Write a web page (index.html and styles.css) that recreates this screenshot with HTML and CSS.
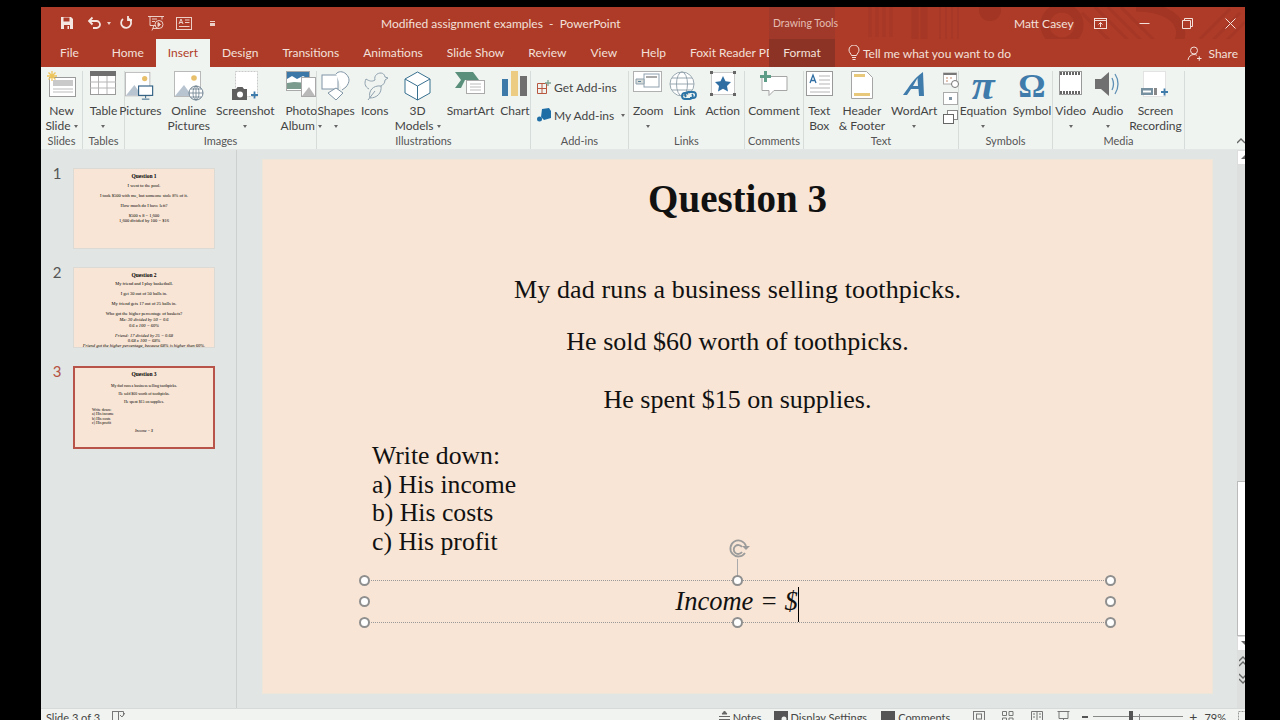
FILE: index.html
```html
<!DOCTYPE html>
<html lang="en">
<head>
  <meta charset="UTF-8">
  <title>Modified assignment examples - PowerPoint</title>
  <link rel="stylesheet" href="styles.css">
</head>
<body>
<div class="window">

  <!-- title bar -->
  <div class="titlebar">
    <svg class="pattern" width="405" height="60" viewBox="0 0 405 60" fill="none" stroke="#a23524">
      <path d="M30 0v30M37 0v30M44 0v30M51 0v30" stroke-width="3" opacity=".55"/>
      <path d="M75 0v38M84 0v38" stroke-width="7" opacity=".7"/>
      <path d="M100 0v34M106 0v34M112 0v34M118 0v34" stroke-width="2" opacity=".55"/>
      <circle cx="150" cy="3" r="11" fill="#a23524" stroke="none"/>
      <circle cx="222" cy="18" r="17" stroke-width="9"/>
      <path d="M255 0l45 45M268 0l45 45M281 0l45 45M242 6l40 40" stroke-width="3" opacity=".7"/>
      <path d="M296 0c50 0 60 34 20 58" stroke-width="9"/>
      <path d="M360 32l30-30M368 38l32-32M376 44l29-29" stroke-width="3" opacity=".6"/>
    </svg>
    <div class="qat">
      <svg width="14" height="14" viewBox="0 0 14 14"><path d="M1 1h10l2 2v10H1z" fill="#f4e6e1"/><path d="M3.500 1.500h6v4h-6z" fill="#ad3b28"/><path d="M4 9h6v4H4z" fill="#ad3b28"/><path d="M7.500 10h1.500v3H7.500z" fill="#f4e6e1"/></svg>
      <svg class="qat-undo" width="15" height="14" viewBox="0 0 15 14" fill="none" stroke="#f4e6e1" stroke-width="1.800"><path d="M2 5h7.500a3.500 3.500 0 0 1 0 7H6"/><path d="M5.500 1.500L2 5l3.500 3.500"/></svg>
      <span class="mini-caret"></span>
      <svg class="qat-redo" width="14" height="14" viewBox="0 0 14 14" fill="none" stroke="#f4e6e1" stroke-width="1.800"><path d="M9.500 2.500A5 5 0 1 1 4 3"/><path d="M9 0v4h4"/></svg>
      <svg class="qat-show" width="18" height="17" viewBox="0 0 18 17" fill="none" stroke="#eccfc7"><path d="M1 1.500h16M3 1.500v9h6M15 1.500v3"/><circle cx="12" cy="9.500" r="4"/><path d="M11 7.500l2.500 2-2.500 2z" fill="#eccfc7"/><path d="M5 4h5M5 6.500h3M7 10.500l-2 5M6 13.500h6"/></svg>
      <svg class="qat-box" width="16" height="13" viewBox="0 0 16 13" fill="none" stroke="#eccfc7"><rect x=".5" y=".5" width="15" height="12"/><path d="M3 7l2-5 2 5M3.800 5.500h2.500M9 3h4.500M9 5.500h4.500M3 9.500h10.500"/></svg>
      <span class="qat-more"></span>
    </div>
    <div class="doc-title">Modified assignment examples&nbsp; - &nbsp;PowerPoint</div>
    <div class="ctx-title">Drawing Tools</div>
    <div class="account">Matt Casey</div>
    <div class="win-btns">
      <svg width="13" height="11" viewBox="0 0 13 11" fill="none" stroke="#f3e0da"><rect x=".5" y=".5" width="12" height="10"/><path d="M.5 2.500h12M6.500 9V4.500M4.500 6.500l2-2 2 2"/></svg>
      <svg width="11" height="11" viewBox="0 0 11 11" stroke="#f3e0da"><path d="M.5 5.500h10"/></svg>
      <svg width="11" height="11" viewBox="0 0 11 11" fill="none" stroke="#f3e0da"><path d="M.5 2.500h8v8h-8zM2.500 2.500v-2h8v8h-2"/></svg>
      <svg width="11" height="11" viewBox="0 0 11 11" stroke="#f3e0da"><path d="M.5.500l10 10M10.500.500l-10 10"/></svg>
    </div>
  </div>

  <!-- tabs -->
  <div class="tabbar">
    <div class="tabs-main">
      <div class="tab tab-file">File</div>
      <div class="tab">Home</div>
      <div class="tab active">Insert</div>
      <div class="tab">Design</div>
      <div class="tab">Transitions</div>
      <div class="tab">Animations</div>
      <div class="tab">Slide Show</div>
      <div class="tab">Review</div>
      <div class="tab">View</div>
      <div class="tab">Help</div>
      <div class="tab">Foxit Reader PDF</div>
    </div>
    <div class="tab tab-format">Format</div>
    <div class="tell-me">
      <svg width="12" height="16" viewBox="0 0 12 16" fill="none" stroke="#f3e0da"><path d="M3.500 10.500C3 8.500 1 7.500 1 5a5 5 0 0 1 10 0c0 2.500-2 3.500-2.500 5.500z"/><path d="M4 12.500h4M4.500 14.500h3"/></svg>
      Tell me what you want to do
    </div>
    <div class="share">
      <svg width="15" height="15" viewBox="0 0 15 15" fill="none" stroke="#f3e0da"><circle cx="7" cy="4.500" r="3.500"/><path d="M1 14c.5-3.500 3-5.500 6-5.500 1 0 2 .2 2.800.7M10 12.500h4.500M12.250 10.300v4.500"/></svg>
      Share
    </div>
  </div>

  <!-- ribbon -->
  <div class="ribbon">
    <div class="group g-slides">
      <div class="tools">
        <div class="tool">
          <div class="icon">
            <svg width="30" height="27" viewBox="0 0 30 27" fill="none"><rect x="2.500" y="6.500" width="26" height="19" fill="#fff" stroke="#9a9a9a"/><rect x="6" y="9" width="20" height="6" fill="#c9c9c9"/><path d="M6 18h20M6 21h20" stroke="#bbb"/><path d="M5 0v10M0 5h10M1.500 1.500l7 7M8.500 1.500l-7 7" stroke="#edc45a" stroke-width="1.300"/></svg>
          </div>
          <span>New</span><span>Slide <i class="caret"></i></span>
        </div>
      </div>
      <div class="group-name">Slides</div>
    </div>

    <div class="group g-tables">
      <div class="tools">
        <div class="tool">
          <div class="icon">
            <svg width="26" height="24" viewBox="0 0 26 24" fill="none"><rect x=".5" y=".5" width="25" height="23" fill="#fff" stroke="#9a9a9a"/><rect x="0" y="0" width="26" height="5" fill="#6f6f6f"/><path d="M0 11h26M0 17h26M8.500 5v18M17 5v18" stroke="#b5b5b5"/></svg>
          </div>
          <span>Table</span><span><i class="caret"></i></span>
        </div>
      </div>
      <div class="group-name">Tables</div>
    </div>

    <div class="group g-images">
      <div class="tools">
        <div class="tool">
          <div class="icon">
            <svg width="30" height="30" viewBox="0 0 32 30" fill="none"><rect x=".5" y=".5" width="26" height="25" fill="#fff" stroke="#b9b9b9"/><circle cx="21" cy="7" r="2.800" fill="#e8bf6a"/><path d="M1 25l9-11 8 11z" fill="#b8c4d0"/><rect x="14.500" y="15" width="15" height="10" fill="#fff" stroke="#2d5d80" stroke-width="1.200"/><path d="M22 25v3M18 29h8" stroke="#2d5d80"/></svg>
          </div>
          <span>Pictures</span>
        </div>
        <div class="tool">
          <div class="icon">
            <svg width="30" height="30" viewBox="0 0 30 30" fill="none"><rect x=".5" y=".5" width="26" height="25" fill="#fff" stroke="#b9b9b9"/><circle cx="20" cy="7" r="2.800" fill="#e8bf6a"/><path d="M1 25l9-11 8 11z" fill="#b8c4d0"/><circle cx="22" cy="22" r="7" fill="#fff" stroke="#6b7f8e"/><path d="M15 22h14M22 15v14M17 18h10M17 26h10" stroke="#6b7f8e" stroke-width=".8"/><ellipse cx="22" cy="22" rx="3" ry="7" stroke="#6b7f8e" stroke-width=".8"/></svg>
          </div>
          <span>Online</span><span>Pictures</span>
        </div>
        <div class="tool">
          <div class="icon">
            <svg width="28" height="30" viewBox="0 0 28 30" fill="none"><rect x="4.500" y=".5" width="22" height="25" fill="#fff" stroke="#c9c9c9" stroke-dasharray="2 1"/><path d="M1 18h4l1.500-2h5l1.500 2h3v11H1z" fill="#5e5e5e"/><circle cx="9" cy="23.500" r="3" fill="#fff"/><path d="M20 24h7M23.500 20.500v7" stroke="#3f7cab" stroke-width="1.800"/></svg>
          </div>
          <span>Screenshot</span><span><i class="caret"></i></span>
        </div>
        <div class="tool">
          <div class="icon">
            <svg width="30" height="26" viewBox="0 0 30 26" fill="none"><rect x=".5" y=".5" width="23" height="19" fill="#fff" stroke="#a9a9a9"/><path d="M1 1h22v7H1z" fill="#3b78a8"/><path d="M1 8l5-3 5 3 6-3 6 3v3H1z" fill="#fff"/><path d="M1 18v-6l7-1 15 1v6z" fill="#7c9b8f"/><rect x="15.500" y="6.500" width="14" height="19" fill="#fff" stroke="#a9a9a9"/><path d="M16 25l7-9 6 9z" fill="#b9b9b9"/></svg>
          </div>
          <span>Photo</span><span>Album <i class="caret"></i></span>
        </div>
      </div>
      <div class="group-name">Images</div>
    </div>

    <div class="group g-illus">
      <div class="tools">
        <div class="tool">
          <div class="icon">
            <svg width="31" height="30" viewBox="0 0 31 30" fill="none" stroke="#7f94a5" stroke-width="1"><rect x="1" y="4" width="16" height="14" fill="#fff"/><path d="M15 3c2-3 7-3 10 0 4 4 4 8 0 13l-4 3" fill="#fff"/><path d="M15 17l7 5-7 7-8-7z" fill="#fff"/></svg>
          </div>
          <span>Shapes</span><span><i class="caret"></i></span>
        </div>
        <div class="tool">
          <div class="icon">
            <svg width="28" height="30" viewBox="0 0 28 30" fill="none" stroke="#8fa1ae"><path d="M14 9c-2-7 9-10 10-3l3 1-3 2c0 3-2 5-4 6M14 9c-3 2-6 1-9-1-2 4-1 8 3 10"/><path d="M9 27c-2-7 3-13 11-12 1 7-4 12-11 12zM7 29l7-9"/></svg>
          </div>
          <span>Icons</span>
        </div>
        <div class="tool">
          <div class="icon">
            <svg width="27" height="30" viewBox="0 0 27 30" fill="none" stroke="#37708f"><path d="M13.500 1L26 8v14l-12.500 7L1 22V8z" fill="#fff"/><path d="M1 8l12.500 7L26 8M13.500 15v14"/></svg>
          </div>
          <span>3D</span><span>Models <i class="caret"></i></span>
        </div>
        <div class="tool">
          <div class="icon">
            <svg width="30" height="24" viewBox="0 0 30 24"><path d="M0 1h18l6 8H6z" fill="#5a8f7b"/><path d="M0 17h6l4-8-4 0z" fill="#5a8f7b"/><rect x="11.500" y="9.500" width="18" height="13" fill="#fff" stroke="#aaa"/><path d="M15 13h11M15 16h11M15 19h11" stroke="#bbb"/></svg>
          </div>
          <span>SmartArt</span>
        </div>
        <div class="tool">
          <div class="icon">
            <svg width="26" height="26" viewBox="0 0 26 26"><rect x="0" y="8" width="6" height="17" fill="#3d7aaa"/><rect x="9" y="0" width="7" height="25" fill="#eccb82"/><rect x="18" y="5" width="7" height="20" fill="#6f6f6f"/></svg>
          </div>
          <span>Chart</span>
        </div>
      </div>
      <div class="group-name">Illustrations</div>
    </div>

    <div class="group g-addins">
      <div class="tools addin-rows">
        <div class="addin">
          <svg width="14" height="14" viewBox="0 0 14 14" fill="none"><path d="M.5 3.500h9v10h-9zM.5 8.500h9M5 3.500v10" stroke="#b8573f"/><path d="M11 0v6M8 3h6" stroke="#7fa596" stroke-width="1.300"/></svg>
          Get Add-ins
        </div>
        <div class="addin">
          <svg width="14" height="14" viewBox="0 0 14 14"><path d="M5 1l7-1 2 3v7l-7 2-3-3z" fill="#1f6fa6"/><circle cx="2.500" cy="11" r="2.500" fill="#1f6fa6"/></svg>
          My Add-ins <i class="caret addin-caret"></i>
        </div>
      </div>
      <div class="group-name">Add-ins</div>
    </div>

    <div class="group g-links">
      <div class="tools">
        <div class="tool">
          <div class="icon">
            <svg width="30" height="22" viewBox="0 0 30 22" fill="none"><rect x=".5" y=".5" width="28" height="20" fill="#fff" stroke="#b0b0b0"/><rect x="11" y="3" width="15" height="13" fill="#fff" stroke="#8fa1ae"/><path d="M13 6h11" stroke="#aaa" stroke-width="2"/><path d="M3 8h8v5H3z" fill="#d7dcd9" stroke="#8fa1ae"/><path d="M5 10.500h3" stroke="#5a7f9a"/></svg>
          </div>
          <span>Zoom</span><span><i class="caret"></i></span>
        </div>
        <div class="tool">
          <div class="icon">
            <svg width="30" height="30" viewBox="0 0 30 30" fill="none"><g stroke="#8f9ea8" stroke-width=".9"><circle cx="13" cy="13" r="12" fill="#fff"/><ellipse cx="13" cy="13" rx="5.500" ry="12"/><path d="M1 13h24M3 7h20M3 19h20"/></g><path d="M19 22h-3a3 3 0 0 0 0 6h5a3 3 0 0 0 2-5M21 27h3a3 3 0 0 0 0-6h-5a3 3 0 0 0-2 5" stroke="#2c73a6" stroke-width="1.800"/></svg>
          </div>
          <span>Link</span>
        </div>
        <div class="tool">
          <div class="icon">
            <svg width="26" height="25" viewBox="0 0 26 25" fill="none"><rect x="1.500" y="1.500" width="23" height="22" fill="#fff" stroke="#999" stroke-dasharray="1 1"/><path d="M13 5l2.500 5.200 5.500.8-4 3.900 1 5.600-5-2.700-5 2.700 1-5.600-4-3.900 5.500-.8z" fill="#2f6ea3"/><path d="M0 0h3v3H0zM23 0h3v3h-3zM0 22h3v3H0zM23 22h3v3h-3z" fill="#666"/></svg>
          </div>
          <span>Action</span>
        </div>
      </div>
      <div class="group-name">Links</div>
    </div>

    <div class="group g-comments">
      <div class="tools">
        <div class="tool">
          <div class="icon">
            <svg width="29" height="26" viewBox="0 0 29 26" fill="none"><path d="M3 5.500h25v14H15l-5 5v-5H3z" fill="#fff" stroke="#a5a5a5"/><path d="M6.500 0v11M1 5.500h11" stroke="#5d9c86" stroke-width="3"/></svg>
          </div>
          <span>Comment</span>
        </div>
      </div>
      <div class="group-name">Comments</div>
    </div>

    <div class="group g-text">
      <div class="tools">
        <div class="tool">
          <div class="icon">
            <svg width="27" height="25" viewBox="0 0 27 25" fill="none"><rect x=".5" y=".5" width="26" height="24" fill="#fff" stroke="#999"/><path d="M4 12l3-8 3 8M5 9.500h4" stroke="#2f6ea3" stroke-width="1.300"/><path d="M13 5h11M13 9h11M13 13h11M4 17h20M4 21h20" stroke="#b5b5b5"/></svg>
          </div>
          <span>Text</span><span>Box</span>
        </div>
        <div class="tool">
          <div class="icon">
            <svg width="22" height="28" viewBox="0 0 22 28" fill="none"><path d="M.5.500h15l6 6v21H.5z" fill="#fff" stroke="#a5a5a5"/><path d="M3 3h11v3H3zM3 22h16v3H3z" fill="#e8c97c"/></svg>
          </div>
          <span>Header</span><span>&amp; Footer</span>
        </div>
        <div class="tool">
          <div class="icon">
            <svg width="22" height="26" viewBox="0 0 22 26"><path d="M0 24C6 16 11 7 20 1l1 24-5 0-.5-7H8l-4 6zM10 15h5l-.5-8z" fill="#3f7cab"/></svg>
          </div>
          <span>WordArt</span><span><i class="caret"></i></span>
        </div>
        <div class="tool-stack">
          <svg width="16" height="16" viewBox="0 0 16 16" fill="none"><rect x=".5" y="1" width="13" height="11" fill="#fff" stroke="#aaa"/><path d="M.5 1h13v2H.5z" fill="#777"/><path d="M3 6h2M7 6h2M3 9h2" stroke="#c58a6a"/><circle cx="12" cy="12" r="3.500" fill="#fff" stroke="#777"/></svg>
          <svg width="15" height="13" viewBox="0 0 15 13" fill="none"><rect x=".5" y=".5" width="14" height="12" fill="#fff" stroke="#aaa"/><rect x="6" y="5" width="3" height="3" fill="#7f94a5"/></svg>
          <svg width="15" height="15" viewBox="0 0 15 15" fill="none"><rect x="4.500" y="1.500" width="10" height="9" fill="#fff" stroke="#888"/><rect x=".5" y="5.500" width="10" height="9" fill="#fff" stroke="#666"/></svg>
        </div>
      </div>
      <div class="group-name">Text</div>
    </div>

    <div class="group g-symbols">
      <div class="tools">
        <div class="tool">
          <div class="icon glyph glyph-pi">π</div>
          <span>Equation</span><span><i class="caret"></i></span>
        </div>
        <div class="tool">
          <div class="icon glyph">Ω</div>
          <span>Symbol</span>
        </div>
      </div>
      <div class="group-name">Symbols</div>
    </div>

    <div class="group g-media">
      <div class="tools">
        <div class="tool">
          <div class="icon">
            <svg width="23" height="24" viewBox="0 0 23 24" fill="none"><rect x=".5" y=".5" width="22" height="23" fill="#fff" stroke="#999"/><path d="M1 2.500h21M1 21.500h21" stroke="#666" stroke-width="3" stroke-dasharray="2 1"/></svg>
          </div>
          <span>Video</span><span><i class="caret"></i></span>
        </div>
        <div class="tool">
          <div class="icon">
            <svg width="25" height="26" viewBox="0 0 25 26" fill="none"><path d="M0 8h6l8-7v24l-8-7H0z" fill="#707070"/><path d="M17 7c2 4 2 8 0 12M20 3c4 6 4 14 0 20" stroke="#5f90b5" stroke-width="1.300"/></svg>
          </div>
          <span>Audio</span><span><i class="caret"></i></span>
        </div>
        <div class="tool">
          <div class="icon">
            <svg width="28" height="28" viewBox="0 0 28 28" fill="none"><rect x="2.500" y=".5" width="22" height="25" fill="#fff" stroke="#ccc" stroke-dasharray="1 1"/><rect x="0" y="17" width="12" height="7" fill="#76909f"/><path d="M2 20.500h8" stroke="#fff" stroke-width="2"/><path d="M13 17h3v7h-3z" fill="#888"/><path d="M20 21h7M23.500 17.500v7" stroke="#3f7cab" stroke-width="1.800"/></svg>
          </div>
          <span>Screen</span><span>Recording</span>
        </div>
      </div>
      <div class="group-name">Media</div>
    </div>

    <div class="collapse">
      <svg width="8" height="6" viewBox="0 0 8 6" fill="none" stroke="#666" stroke-width="1.300"><path d="M0 5l4-4 4 4"/></svg>
    </div>
  </div>

  <!-- main -->
  <div class="main">
    <div class="thumbs">
      <div class="thumb-row">
        <div class="thumb-num">1</div>
        <div class="thumb">
          <h4>Question 1</h4>
          <p>I went to the pool.</p>
          <p>I took $500 with me, but someone stole 8% of it.</p>
          <p>How much do I have left?</p>
          <p class="t-tight">$500 x 8 = 1,600</p>
          <p class="t-tight">1,600 divided by 100 = $16</p>
        </div>
      </div>
      <div class="thumb-row">
        <div class="thumb-num">2</div>
        <div class="thumb thumb-dense">
          <h4>Question 2</h4>
          <p>My friend and I play basketball.</p>
          <p>I get 30 out of 50 balls in.</p>
          <p>My friend gets 17 out of 25 balls in.</p>
          <p class="t-mid">Who got the higher percentage of baskets?</p>
          <p class="t-mid"><em>Me: 30 divided by 50 = 0.6</em></p>
          <p><em>0.6 x 100 = 60%</em></p>
          <p class="t-tight"><em>Friend: 17 divided by 25 = 0.68</em></p>
          <p class="t-tight"><em>0.68 x 100 = 68%</em></p>
          <p class="t-tight"><em>Friend got the higher percentage, because 68% is higher than 60%.</em></p>
        </div>
      </div>
      <div class="thumb-row current">
        <div class="thumb-num">3</div>
        <div class="thumb thumb-small">
          <h4>Question 3</h4>
          <p>My dad runs a business selling toothpicks.</p>
          <p>He sold $60 worth of toothpicks.</p>
          <p>He spent $15 on supplies.</p>
          <ul>
            <li>Write down:</li>
            <li>a) His income</li>
            <li>b) His costs</li>
            <li>c) His profit</li>
          </ul>
          <p class="t-income"><em>Income = $</em></p>
        </div>
      </div>
    </div>

    <div class="editor">
      <div class="slide">
        <h1>Question 3</h1>
        <p class="line line-1">My dad runs a business selling toothpicks.</p>
        <p class="line line-2">He sold $60 worth of toothpicks.</p>
        <p class="line line-3">He spent $15 on supplies.</p>
        <div class="write-down">
          <div>Write down:</div>
          <div>a) His income</div>
          <div>b) His costs</div>
          <div>c) His profit</div>
        </div>
        <div class="textbox">
          <svg class="rotate" width="26" height="22" viewBox="0 0 26 22" fill="none" stroke="#9b9b9b" stroke-width="1.800"><path d="M19 15a8 8 0 1 1 1-7"/><path d="M16 14a4.500 4.500 0 1 1 0-5"/><path d="M16 8h8l-4 4z" fill="#9b9b9b" stroke="none"/></svg>
          <span class="stem"></span>
          <span class="handle h-tl"></span><span class="handle h-tc"></span><span class="handle h-tr"></span>
          <span class="handle h-ml"></span><span class="handle h-mr"></span>
          <span class="handle h-bl"></span><span class="handle h-bc"></span><span class="handle h-br"></span>
          <em>Income = $</em><span class="text-caret"></span>
        </div>
      </div>
    </div>

    <div class="scrollbar">
      <div class="sb-btn"><i class="sb-up"></i></div>
      <div class="sb-track"></div>
      <div class="sb-thumb"></div>
      <div class="sb-btn"><i class="sb-dn"></i></div>
      <svg class="sb-page" width="8" height="11" viewBox="0 0 8 11" fill="none" stroke="#666" stroke-width="1.300"><path d="M0 5l4-4 4 4M0 10l4-4 4 4"/></svg>
      <svg class="sb-page" width="8" height="11" viewBox="0 0 8 11" fill="none" stroke="#666" stroke-width="1.300"><path d="M0 1l4 4 4-4M0 6l4 4 4-4"/></svg>
    </div>
  </div>

  <!-- status bar -->
  <div class="status">
    <span class="st-slide">Slide 3 of 3</span>
    <svg class="st-check" width="13" height="12" viewBox="0 0 13 12" fill="none" stroke="#777"><rect x=".5" y=".5" width="6" height="11"/><path d="M6.500.500h5v4M8 4l2 2 3-4"/></svg>
    <div class="st-right">
      <span class="st-item"><svg width="11" height="9" viewBox="0 0 11 9" stroke="#666" fill="#666"><path d="M5.500 0l2.500 3H3zM0 5.500h11M0 8.500h11"/></svg>Notes</span>
      <span class="st-item st-display"><svg width="14" height="12" viewBox="0 0 14 12"><rect width="14" height="12" fill="#555"/><circle cx="10" cy="8" r="2.500" fill="#f0f3ef"/></svg>Display Settings</span>
      <span class="st-item st-comments"><svg width="14" height="12" viewBox="0 0 14 12"><path d="M0 0h14v9H7l-2 3V9H0z" fill="#555"/></svg>Comments</span>
      <span class="views">
        <svg width="12" height="12" viewBox="0 0 12 12" fill="none" stroke="#777"><rect x=".5" y=".5" width="11" height="11"/><rect x="3.500" y="3" width="5" height="5"/></svg>
        <svg class="v2" width="12" height="12" viewBox="0 0 12 12" fill="none" stroke="#777"><path d="M.5.500h4v4h-4zM7 .5h4v4H7zM.5 7h4v4h-4zM7 7h4v4H7z"/></svg>
        <svg class="v2" width="12" height="12" viewBox="0 0 12 12" fill="none" stroke="#777"><path d="M.5.500h11v11H.5zM6 .5v11M2 3h2M2 6h2M8 3h2M8 6h2"/></svg>
        <svg class="v3" width="13" height="12" viewBox="0 0 13 12" fill="none" stroke="#777"><path d="M.5.500h12M2 .5v7h9v-7M6.500 7.500v4"/></svg>
      </span>
      <span class="zoom-minus"></span>
      <span class="zoom-track"><i class="zoom-mid"></i><i class="zoom-knob"></i></span>
      <span class="zoom-plus">+</span>
      <span class="zoom-val">79%</span>
      <svg class="zoom-fit" width="7" height="12" viewBox="0 0 7 12" fill="none" stroke="#999" stroke-dasharray="2 1"><path d="M.5.500h7v11h-7z"/></svg>
    </div>
  </div>

</div>
</body>
</html>
```

FILE: styles.css
```css
* {
  box-sizing: border-box;
}

html, body {
  margin: 0;
  height: 720px;
  overflow: hidden;
  background-color: #000;
}

body {
  padding: 7px 35px 0 41px;
  font-family: Lato, "Open Sans", sans-serif;
  font-size: 12px;
  color: #444;
}

svg {
  display: block;
}

.window {
  width: 1204px;
  height: 713px;
  display: flex;
  flex-direction: column;
  overflow: hidden;
}

/* title bar */

.titlebar {
  position: relative;
  height: 32px;
  display: flex;
  align-items: center;
  background-color: #ad3b28;
  color: #f3e0da;
}

.pattern {
  position: absolute;
  left: 799px;
  top: 0;
}

.qat {
  position: relative;
  width: 340px;
  display: flex;
  align-items: center;
  padding-left: 19px;
}

.qat-undo { margin-left: 13px; }
.qat-redo { margin-left: 8px; }
.qat-show { margin-left: 14px; }
.qat-box  { margin-left: 11px; }

.mini-caret {
  margin-left: 5px;
  border-top: 3px solid #eccfc7;
  border-left: 2.500px solid transparent;
  border-right: 2.500px solid transparent;
}

.qat-more {
  margin-left: 18px;
  width: 5px;
  height: 5px;
  border-top: 1px solid #eccfc7;
  border-bottom: 3px solid #eccfc7;
}

.doc-title {
  position: relative;
  width: 388px;
  white-space: nowrap;
}

.ctx-title {
  position: relative;
  width: 66px;
  align-self: stretch;
  line-height: 32px;
  padding-left: 4px;
  font-size: 10.500px;
  white-space: nowrap;
  color: #e4bdb2;
  background-color: #a0392a;
}

.account {
  position: relative;
  margin-left: 179px;
  width: 66px;
  white-space: nowrap;
}

.win-btns {
  position: relative;
  display: flex;
  align-items: center;
  margin-left: 14px;
  gap: 32px;
}

/* tabs */

.tabbar {
  position: relative;
  height: 28px;
  display: flex;
  align-items: center;
  background-color: #ad3b28;
  color: #f3e0da;
  white-space: nowrap;
}

.tabs-main {
  width: 728px;
  display: flex;
}

.tab {
  height: 28px;
  line-height: 27px;
  padding: 0 12px;
}

.tab-file {
  padding: 0 21px 0 19px;
}

.tab.active {
  background-color: #f0f4f1;
  color: #b03c28;
}

.tab-format {
  width: 66px;
  padding: 0;
  text-align: center;
  background-color: #8c3325;
}

.tell-me {
  display: flex;
  align-items: center;
  gap: 3px;
  margin-left: 13px;
}

.share {
  display: flex;
  align-items: center;
  gap: 6px;
  margin-left: auto;
  margin-right: 7px;
}

/* ribbon */

.ribbon {
  height: 83px;
  display: flex;
  background-color: #f0f4f1;
  border-bottom: 1px solid #e3e7e5;
}

.group {
  display: flex;
  flex-direction: column;
  margin-top: 4px;
  border-right: 1px solid #d6dcd9;
}

.g-slides   { width: 42px; }
.g-tables   { width: 42px; }
.g-images   { width: 192px; }
.g-illus    { width: 214px; }
.g-addins   { width: 98px; }
.g-links    { width: 116px; }
.g-comments { width: 59px; }
.g-text     { width: 155px; }
.g-symbols  { width: 94px; }
.g-media    { width: 132px; }

.tools {
  flex: 1;
  display: flex;
  justify-content: center;
}

.tool {
  display: flex;
  flex-direction: column;
  align-items: center;
  padding: 0 3px;
  line-height: 15px;
  white-space: nowrap;
}

.icon {
  height: 32px;
  display: flex;
  align-items: flex-start;
  justify-content: center;
}

.glyph {
  font-family: "Liberation Serif", serif;
  font-size: 34px;
  line-height: 30px;
  font-weight: bold;
  color: #3f7cab;
}

.glyph-pi {
  font-size: 42px;
  line-height: 28px;
  font-style: italic;
}

.caret {
  display: inline-block;
  vertical-align: middle;
  border-top: 3px solid #666;
  border-left: 2.500px solid transparent;
  border-right: 2.500px solid transparent;
}

.group-name {
  height: 15px;
  line-height: 14px;
  text-align: center;
  font-size: 11px;
  color: #555;
}

.addin-rows {
  flex-direction: column;
  justify-content: flex-start;
  gap: 10px;
  padding: 7px 0 0 6px;
}

.addin {
  height: 18px;
  display: flex;
  align-items: center;
  gap: 3px;
  white-space: nowrap;
}

.addin-caret {
  margin-left: 4px;
}

.tool-stack {
  display: flex;
  flex-direction: column;
  gap: 4px;
  padding: 1px 0 0 3px;
}

.collapse {
  flex: 1;
  display: flex;
  justify-content: flex-end;
  align-items: flex-end;
  padding-bottom: 5px;
}

/* main area */

.main {
  flex: 1;
  min-height: 0;
  display: flex;
  background-color: #e1e5e4;
}

.thumbs {
  width: 196px;
  padding-top: 18px;
  border-right: 1px solid #ccd0cf;
  display: flex;
  flex-direction: column;
  gap: 18px;
}

.thumb-row {
  display: flex;
  height: 81px;
}

.thumb-num {
  width: 32px;
  text-align: center;
  font-size: 15px;
  line-height: 10px;
  color: #555;
}

.thumb {
  width: 142px;
  height: 81px;
  padding-top: 4px;
  text-align: center;
  font-family: "Liberation Serif", serif;
  font-size: 4.500px;
  line-height: 5px;
  color: #000;
  background-color: #f8e5d5;
  border: 1px solid #dcdad5;
}

.thumb h4 {
  margin: 0 0 3px;
  font-size: 5.500px;
  line-height: 7px;
}

.thumb p {
  margin: 0 0 5px;
}

.thumb .t-tight { margin-bottom: 0; }

.thumb-dense h4 { margin-bottom: 2px; }
.thumb .t-mid { margin-bottom: 1px; }

.thumb-small {
  font-size: 3.900px;
}

.thumb ul {
  margin: 0;
  padding: 0 0 0 17px;
  list-style: none;
  text-align: left;
  line-height: 4.300px;
}

.thumb .t-income {
  margin: 4px 0 0;
}

.current .thumb-num {
  color: #b5523f;
}

.current .thumb {
  height: 83px;
  border: 2px solid #b8534a;
  padding-top: 3px;
}

.current h4 {
  margin-bottom: 6px;
}

.current p {
  margin-bottom: 3px;
}

.editor {
  width: 1000px;
  padding: 9px 24px 0 25px;
}

.slide {
  height: 535px;
  padding-top: 17px;
  font-family: "Liberation Serif", serif;
  color: #111;
  background-color: #f8e5d5;
  border: 1px solid #efe6da;
}

.slide h1 {
  margin: 0;
  text-align: center;
  font-size: 39px;
  line-height: 44px;
}

.line {
  margin: 0;
  text-align: center;
  font-size: 26px;
  line-height: 30px;
}

.line-1 { margin-top: 54px; letter-spacing: .14px; }
.line-2 { margin-top: 22px; }
.line-3 { margin-top: 28px; }

.write-down {
  margin: 27px 0 0 109px;
  font-size: 25.700px;
  line-height: 28.600px;
}

.textbox {
  position: relative;
  margin: 24px 0 0 101px;
  width: 746px;
  height: 43px;
  line-height: 41px;
  text-align: center;
  font-size: 26.500px;
  border-top: 1px dotted #999;
  border-bottom: 1px dotted #999;
}

.text-caret {
  display: inline-block;
  width: 1px;
  height: 35px;
  vertical-align: middle;
  background-color: #000;
}

.handle {
  position: absolute;
  width: 11px;
  height: 11px;
  background-color: #fff;
  border: 2px solid #8f8f8f;
  border-radius: 50%;
}

.h-tl { left: -5px;  top: -6px; }
.h-tc { left: 368px; top: -6px; }
.h-tr { left: 741px; top: -6px; }
.h-ml { left: -5px;  top: 15px; }
.h-mr { left: 741px; top: 15px; }
.h-bl { left: -5px;  top: 36px; }
.h-bc { left: 368px; top: 36px; }
.h-br { left: 741px; top: 36px; }

.stem {
  position: absolute;
  left: 373px;
  top: -22px;
  height: 18px;
  border-left: 1px solid #aaa;
}

.rotate {
  position: absolute;
  left: 362px;
  top: -43px;
}

.scrollbar {
  width: 8px;
  display: flex;
  flex-direction: column;
  background-color: #dcdfde;
}

.sb-btn {
  height: 15px;
  background-color: #fff;
  border: 1px solid #ddd;
  border-right: none;
  overflow: hidden;
}

.sb-btn i {
  display: block;
  margin: 4px 0 0 3px;
  width: 0;
  border-left: 4px solid transparent;
  border-right: 4px solid transparent;
}

.sb-up { border-bottom: 4px solid #666; }
.sb-dn { border-top: 4px solid #666; }

.sb-track {
  height: 316px;
}

.sb-thumb {
  height: 155px;
  background-color: #fff;
  border: 1px solid #bbb;
  border-right: none;
}

.sb-page {
  margin: 5px 0 1px 2px;
}

/* status bar */

.status {
  height: 12px;
  display: flex;
  line-height: 17px;
  font-size: 11px;
  background-color: #f0f3ef;
  border-top: 1px solid #d6dad8;
  white-space: nowrap;
}

.st-slide {
  padding-left: 5px;
}

.st-check {
  margin: 2px 0 0 12px;
}

.st-right {
  margin-left: auto;
  display: flex;
  align-items: flex-start;
}

.st-item {
  display: flex;
  gap: 3px;
}

.st-item svg {
  margin-top: 2px;
}

.st-display { margin-left: 12px; }
.st-comments { margin-left: 14px; }

.views {
  display: flex;
  margin: 2px 0 0 23px;
}

.views .v2 { margin-left: 17px; }
.views .v3 { margin-left: 14px; }

.zoom-minus {
  margin: 7px 0 0 12px;
  width: 6px;
  height: 1px;
  border-top: 2px solid #555;
}

.zoom-track {
  position: relative;
  width: 90px;
  height: 1px;
  margin: 7px 0 0 5px;
  background-color: #888;
}

.zoom-mid {
  position: absolute;
  left: 46px;
  top: -2px;
  height: 6px;
  border-left: 1px solid #888;
}

.zoom-knob {
  position: absolute;
  left: 36px;
  top: -5px;
  width: 4px;
  height: 12px;
  background-color: #555;
}

.zoom-plus {
  margin-left: 6px;
  font-size: 14px;
  line-height: 15px;
}

.zoom-val {
  margin: 0 12px 0 7px;
}

.zoom-fit {
  margin-top: 2px;
}
```
